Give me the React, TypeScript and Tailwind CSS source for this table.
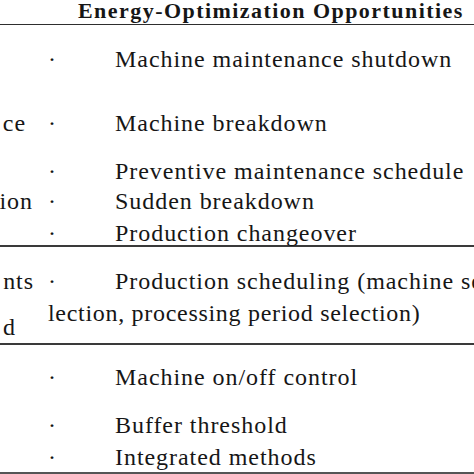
export default function App() {
  return (
    <div className="w-[474px] h-[474px] overflow-hidden bg-white text-[#161616] font-['Liberation_Serif',serif] flex flex-col">
      {/* header */}
      <div className="h-[25px] shrink-0 border-b-[1.5px] border-[#2e2e2e] pl-[78px] flex items-end">
        <span className="font-bold text-[22px] leading-[18px] tracking-[1.45px] pb-[4px] whitespace-nowrap">
          Energy-Optimization Opportunities
        </span>
      </div>

      {/* maintenance */}
      <div className="h-[222px] shrink-0 border-b-2 border-[#3a3a3a] flex text-[24px] leading-[30px] tracking-[0.95px]">
        <div className="w-[48px] shrink-0 flex flex-col items-end">
          <span className="mt-[83px] pr-[22px] whitespace-nowrap">ce</span>
          <span className="mt-[48px] pr-[15px] whitespace-nowrap">ion</span>
        </div>
        <div className="flex flex-col whitespace-nowrap">
          <Item className="mt-[19px]">Machine maintenance shutdown</Item>
          <Item className="mt-[34px]">Machine breakdown</Item>
          <Item className="mt-[18px]">Preventive maintenance schedule</Item>
          <Item>Sudden breakdown</Item>
          <Item className="mt-[2px]">Production changeover</Item>
        </div>
      </div>

      {/* constraints */}
      <div className="h-[98px] shrink-0 border-b-2 border-[#3a3a3a] flex text-[24px] leading-[30px] tracking-[0.95px]">
        <div className="w-[48px] shrink-0 flex flex-col items-end">
          <span className="mt-[19px] pr-[14px] whitespace-nowrap">nts</span>
          <span className="mt-[16px] pr-[32px] whitespace-nowrap">d</span>
        </div>
        <div className="flex flex-col whitespace-nowrap">
          <Item className="mt-[19px]">Production scheduling (machine se</Item>
          <span className="mt-[2px] tracking-[0.7px]">lection, processing period selection)</span>
        </div>
      </div>

      {/* control */}
      <div className="flex-1 border-b-[3px] border-[#555] flex text-[24px] leading-[30px] tracking-[0.95px]">
        <div className="w-[48px] shrink-0" />
        <div className="flex flex-col whitespace-nowrap">
          <Item className="mt-[17px]">Machine on/off control</Item>
          <Item className="mt-[18px]">Buffer threshold</Item>
          <Item className="mt-[2px]">Integrated methods</Item>
        </div>
      </div>
    </div>
  );
}

function Item({ children, className = '' }: { children: React.ReactNode; className?: string }) {
  return (
    <div className={`flex ${className}`}>
      <span className="w-[67px] shrink-0">·</span>
      <span>{children}</span>
    </div>
  );
}
